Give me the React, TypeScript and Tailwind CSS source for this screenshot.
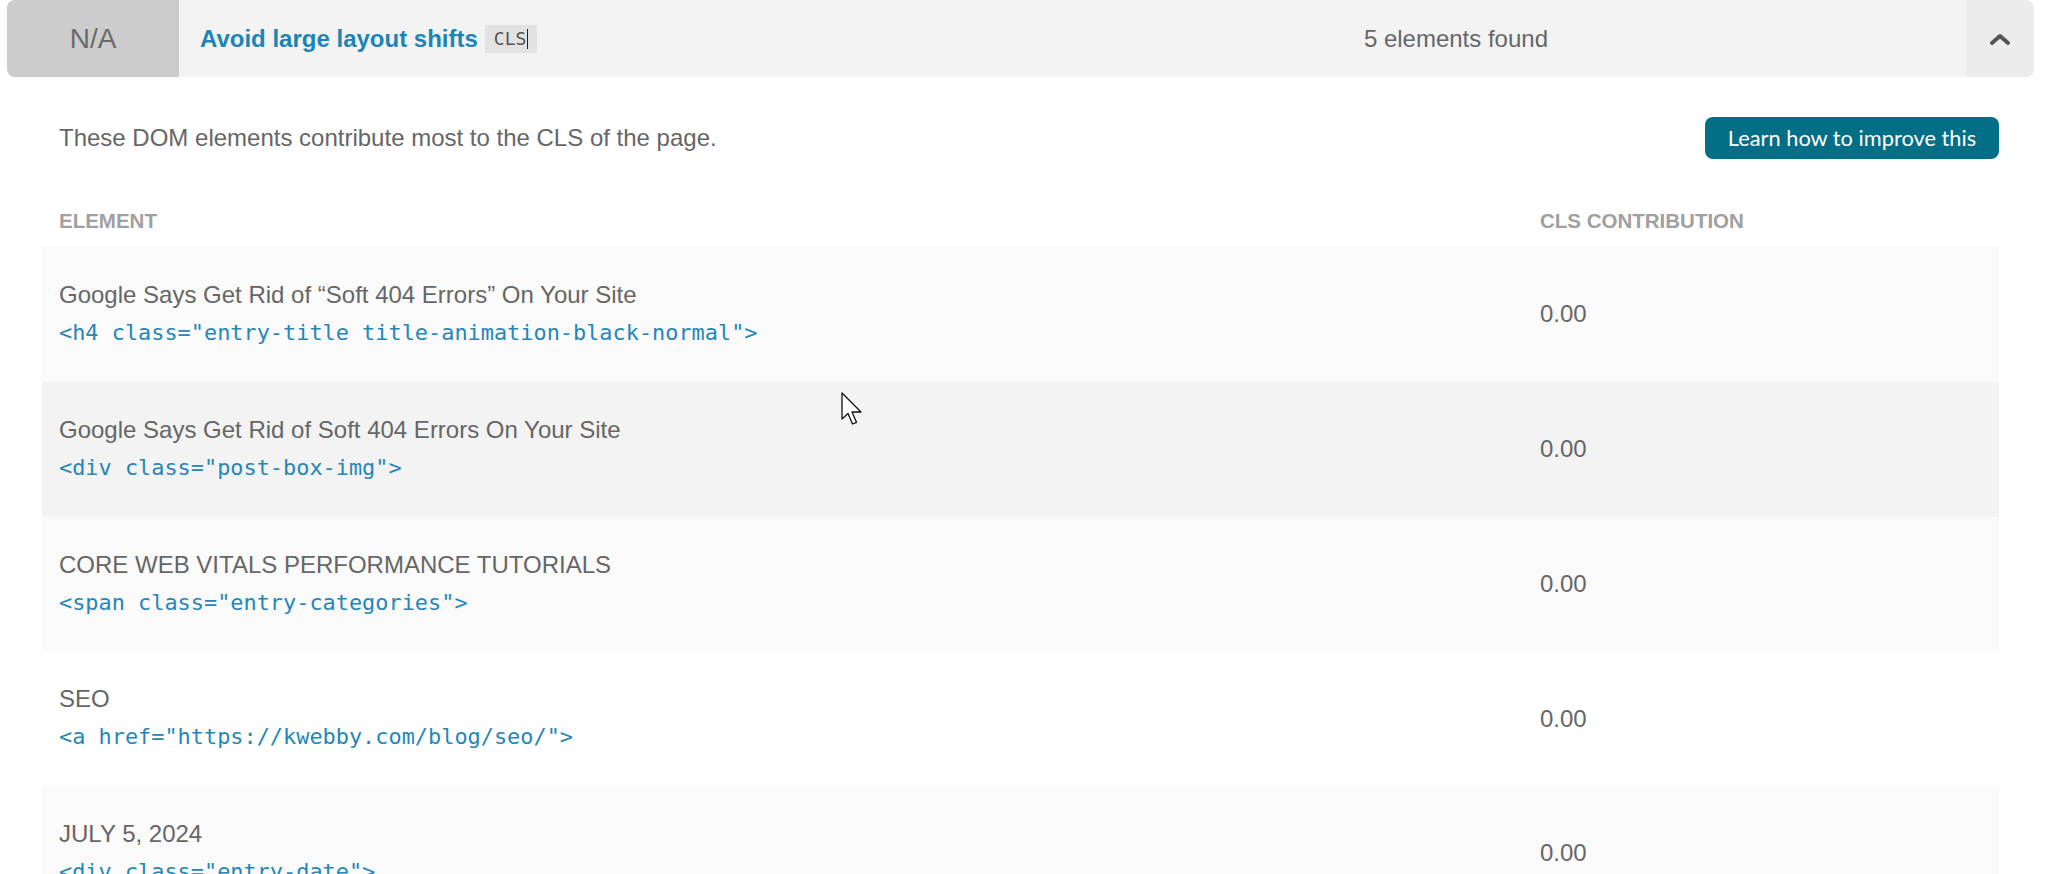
import React from "react";

interface Row {
  label: string;
  code: string;
  value: string;
  bg: string;
}

const rows: Row[] = [
  {
    label: "Google Says Get Rid of \u201cSoft 404 Errors\u201d On Your Site",
    code: '<h4 class="entry-title title-animation-black-normal">',
    value: "0.00",
    bg: "bg-[#fafafa]",
  },
  {
    label: "Google Says Get Rid of Soft 404 Errors On Your Site",
    code: '<div class="post-box-img">',
    value: "0.00",
    bg: "bg-[#f3f3f3]",
  },
  {
    label: "CORE WEB VITALS PERFORMANCE TUTORIALS",
    code: '<span class="entry-categories">',
    value: "0.00",
    bg: "bg-[#fafafa]",
  },
  {
    label: "SEO",
    code: '<a href="https://kwebby.com/blog/seo/">',
    value: "0.00",
    bg: "bg-white",
  },
  {
    label: "JULY 5, 2024",
    code: '<div class="entry-date">',
    value: "0.00",
    bg: "bg-[#fafafa]",
  },
];

const sans = "font-['Liberation_Sans',Arial,sans-serif]";
const mono = "font-['DejaVu_Sans_Mono','Liberation_Mono',monospace]";

const Cursor: React.FC = () => (
  <svg
    className="absolute left-[841px] top-[392px] pointer-events-none"
    width="22"
    height="34"
    viewBox="0 0 22 34"
  >
    <path
      d="M1 1 L1 27 L7 21.5 L11.5 32 L15.5 30.3 L11 20 L20 20 Z"
      fill="#fff"
      stroke="#111"
      strokeWidth="1.3"
      strokeLinejoin="round"
    />
  </svg>
);

const App: React.FC = () => {
  return (
    <div className={`relative w-[2048px] h-[874px] overflow-hidden bg-white pl-[7px] pr-[14px] ${sans}`}>
      {/* Audit header */}
      <div className="flex h-[77px] items-stretch rounded-lg overflow-hidden bg-[#f3f3f3]">
        <div className="w-[172px] flex items-center justify-center bg-[#cccccc] text-[28px] text-[#6b6b6b]">
          N/A
        </div>
        <div className="flex-1 flex items-center pl-[21px]">
          <span className="text-[24px] font-bold text-[#1c84b6]">Avoid large layout shifts</span>
          <span className={`ml-[7px] h-[28px] px-[9px] flex items-center bg-[#e2e2e2] text-[18px] text-[#555] ${mono}`}>
            CLS<span className="ml-[1px] inline-block w-[1px] h-[20px] bg-[#222]" />
          </span>
        </div>
        <div className="flex items-center mr-[418px] text-[24px] text-[#666]">5 elements found</div>
        <div className="w-[68px] flex items-center justify-center bg-[#ececec]">
          <svg width="22" height="14" viewBox="0 0 22 14">
            <polyline
              points="3,11 11,4 19,11"
              fill="none"
              stroke="#555"
              strokeWidth="4"
              strokeLinecap="round"
              strokeLinejoin="round"
            />
          </svg>
        </div>
      </div>

      {/* Audit body */}
      <div className="px-[35px]">
        <div className="flex items-center justify-between mt-[40px] h-[42px]">
          <p className="pl-[17px] text-[24px] text-[#666]">
            These DOM elements contribute most to the CLS of the page.
          </p>
          <button className="w-[294px] h-[42px] rounded-lg bg-[#036f86] text-white text-[21.8px] font-['Lato','Open_Sans',sans-serif]">
            Learn how to improve this
          </button>
        </div>

        <div className="grid grid-cols-[1481px_1fr] px-[17px] mt-[47px] h-[24px] items-center text-[20.5px] font-bold text-[#a0a0a0]">
          <div>ELEMENT</div>
          <div>CLS CONTRIBUTION</div>
        </div>

        <div className="mt-[17px]">
          {rows.map((r, i) => (
            <div key={i} className={`grid grid-cols-[1481px_1fr] px-[17px] h-[134.75px] ${r.bg}`}>
              <div className="pt-[30px]">
                <div className="text-[24px] leading-[36px] text-[#666]">{r.label}</div>
                <div className={`mt-[2px] text-[21.9px] leading-[36px] text-[#2586b9] ${mono}`}>{r.code}</div>
              </div>
              <div className="flex items-center text-[24px] text-[#666]">{r.value}</div>
            </div>
          ))}
        </div>
      </div>

      <Cursor />
    </div>
  );
};

export default App;
